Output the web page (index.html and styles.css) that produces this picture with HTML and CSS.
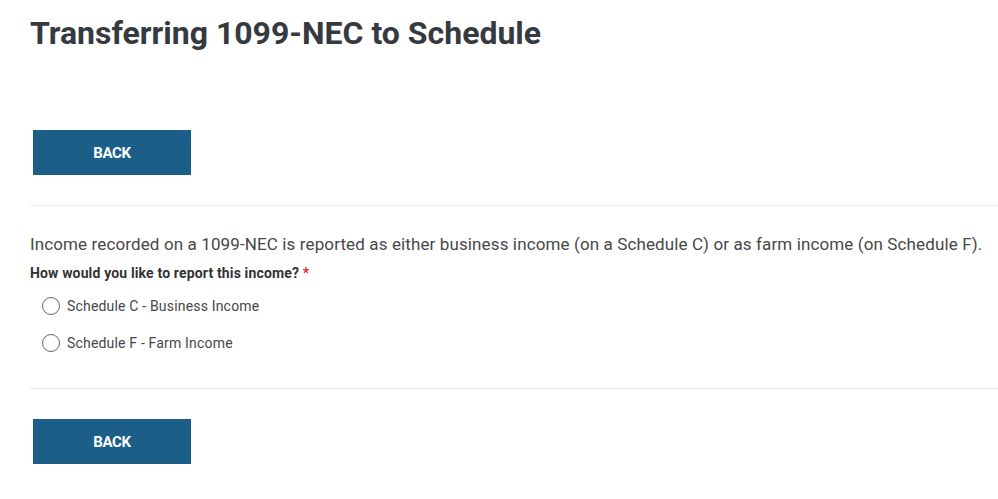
FILE: index.html
```html
<!DOCTYPE html>
<html>
<head>
<meta charset="utf-8">
<link rel="stylesheet" href="styles.css">
</head>
<body>
<main class="page">
  <h1 class="title">Transferring 1099-NEC to Schedule</h1>
  <div class="actions actions-top">
    <button class="btn" type="button">BACK</button>
  </div>
  <hr class="divider">
  <p class="intro">Income recorded on a 1099-NEC is reported as either business income (on a Schedule C) or as farm income (on Schedule F).</p>
  <fieldset class="question">
    <legend class="q-label">How would you like to report this income? <span class="req">*</span></legend>
    <label class="option"><span class="radio"></span><span class="opt-text">Schedule C - Business Income</span></label>
    <label class="option"><span class="radio"></span><span class="opt-text">Schedule F - Farm Income</span></label>
  </fieldset>
  <hr class="divider">
  <div class="actions actions-bottom">
    <button class="btn" type="button">BACK</button>
  </div>
</main>
</body>
</html>
```

FILE: styles.css
```css
html, body {
  margin: 0;
  padding: 0;
  background: #ffffff;
}
body {
  font-family: Roboto, "Liberation Sans", Arial, sans-serif;
  color: #444444;
}
.page {
  padding-left: 30px;
}
.title {
  margin: 14px 0 0 0;
  font-size: 32px;
  line-height: 38px;
  font-weight: 700;
  color: #343a40;
}
.actions {
  padding-left: 3px;
}
.actions-top {
  margin-top: 78px;
  margin-bottom: 30px;
}
.actions-bottom {
  margin-top: 30px;
}
.btn {
  display: block;
  width: 158px;
  height: 45px;
  border: 0;
  border-radius: 0;
  background: #1b5e88;
  color: #ffffff;
  font-family: Roboto, "Liberation Sans", Arial, sans-serif;
  font-size: 15px;
  font-weight: 700;
  letter-spacing: -0.4px;
  padding: 0;
}
.divider {
  margin: 0;
  border: 0;
  border-top: 1px solid #ececec;
  height: 0;
}
.intro {
  margin: 26px 0 0 0;
  font-size: 17px;
  line-height: 24px;
  letter-spacing: 0.12px;
  color: #474747;
}
.question {
  margin: 7px 0 0 0;
  padding: 0 0 27px 0;
  border: 0;
  display: flex;
  flex-direction: column;
}
.q-label {
  padding: 0;
  font-size: 14px;
  line-height: 20px;
  font-weight: 700;
  letter-spacing: 0.15px;
  color: #333333;
  margin-bottom: 4px;
  float: left;
}
.req {
  color: #e0262f;
}
.option {
  display: flex;
  align-items: center;
  gap: 7px;
  padding-left: 12px;
  height: 37px;
  font-size: 14px;
  letter-spacing: 0.18px;
  color: #474747;
}
.radio {
  box-sizing: border-box;
  width: 18px;
  height: 18px;
  border: 1.5px solid #666666;
  border-radius: 50%;
  flex: none;
}
```
